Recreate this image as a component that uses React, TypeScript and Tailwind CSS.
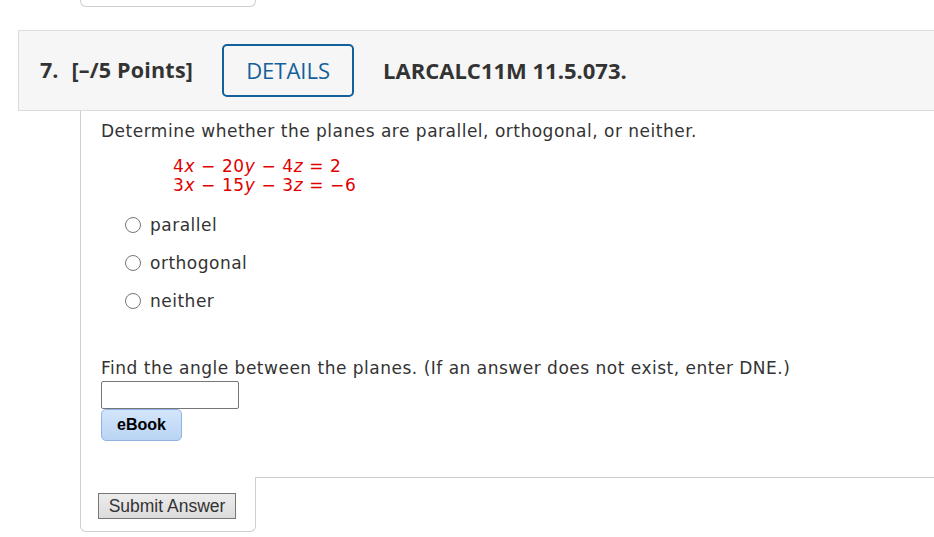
export default function App() {
  const radios = ["parallel", "orthogonal", "neither"];

  return (
    <div className="w-[934px] h-[537px] overflow-hidden bg-white">
      {/* tail of the previous question */}
      <div className="ml-[80px] w-[176px] h-[7px] border border-t-0 border-[#cfcfcf] rounded-b-[6px]" />

      {/* question header */}
      <div
        className="mt-[23px] ml-[18px] h-[81px] flex items-center pl-[21px] bg-[#f6f6f6] border border-r-0 border-[#dcdcdc] text-[#333] font-bold text-[21.5px]"
        style={{ fontFamily: '"Open Sans", sans-serif' }}
      >
        <span>7.</span>
        <span className="ml-[13px] tracking-[0.2px]">[–/5 Points]</span>
        <button className="ml-[29px] w-[132px] h-[53px] rounded-[5px] border-2 border-[#14609a] bg-transparent text-[#14609a] font-normal text-[22px]">
          DETAILS
        </button>
        <span className="ml-[29px] text-[22px]">LARCALC11M 11.5.073.</span>
      </div>

      {/* question body */}
      <div
        className="ml-[80px] text-[#333] text-[17px] tracking-[0.5px]"
        style={{ fontFamily: '"DejaVu Sans", Verdana, sans-serif' }}
      >
        <div className="border-l border-[#cfcfcf] pl-[20px] pt-[10px] h-[366px]">
          <p className="leading-[21px]">
            Determine whether the planes are parallel, orthogonal, or neither.
          </p>
          <div className="ml-[72px] mt-[15px] text-[#e00000] leading-[19px] tracking-[0.6px]">
            <div>
              4<i>x</i> − 20<i>y</i> − 4<i>z</i> = 2
            </div>
            <div>
              3<i>x</i> − 15<i>y</i> − 3<i>z</i> = −6
            </div>
          </div>
          <div className="mt-[19px] flex flex-col gap-[16px]">
            {radios.map((r) => (
              <label key={r} className="flex items-center h-[22px] ml-[24px]">
                <span className="w-[16px] h-[16px] rounded-full border-[1.5px] border-[#767676] bg-white" />
                <span className="ml-[9px] leading-[22px]">{r}</span>
              </label>
            ))}
          </div>
          <p className="mt-[46px] leading-[20px]">
            Find the angle between the planes. (If an answer does not exist, enter DNE.)
          </p>
          <input
            type="text"
            className="mt-[3px] block w-[138px] h-[28px] border border-[#767676] rounded-[2px] bg-white"
          />
          <button
            className="block w-[81px] h-[32px] rounded-[5px] border border-[#8fb4e3] bg-gradient-to-b from-[#d3e5fb] to-[#b9d4f4] text-black font-bold text-[16px] tracking-normal"
            style={{ fontFamily: '"Liberation Sans", Arial, sans-serif' }}
          >
            eBook
          </button>
        </div>

        {/* submit tab */}
        <div className="flex">
          <div className="w-[176px] h-[55px] border border-t-0 border-[#cfcfcf] rounded-b-[6px] pl-[17px] pt-[16px]">
            <button
              className="w-[138px] h-[26px] border border-[#767676] bg-gradient-to-b from-[#ececec] to-[#dcdcdc] text-[#333] text-[17.5px] leading-[24px] tracking-normal"
              style={{ fontFamily: '"Liberation Sans", Arial, sans-serif' }}
            >
              Submit Answer
            </button>
          </div>
          <div className="flex-1 border-t border-[#cfcfcf]" />
        </div>
      </div>
    </div>
  );
}
